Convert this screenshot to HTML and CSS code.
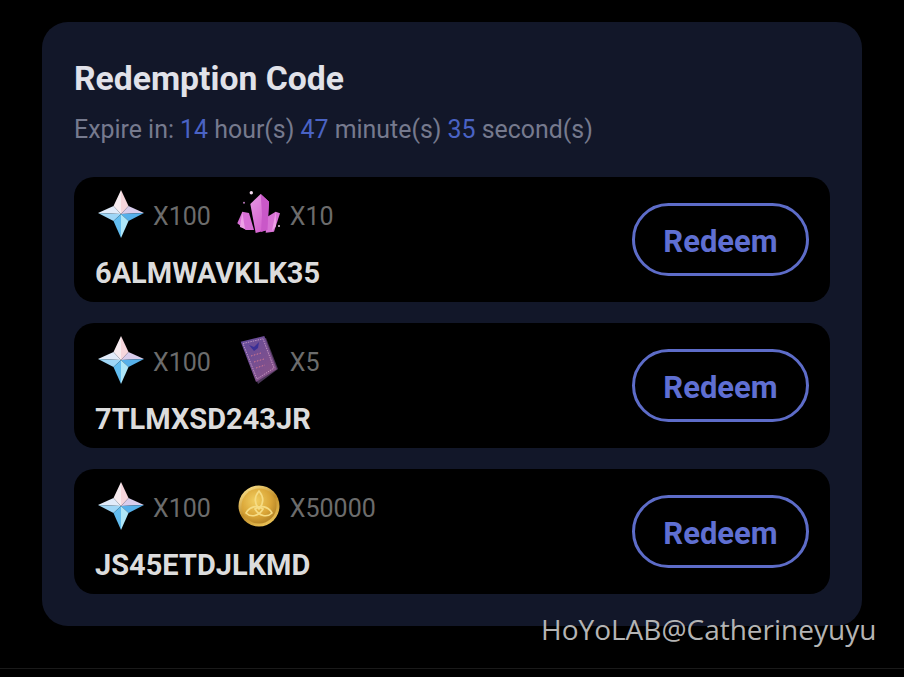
FILE: index.html
```html
<!DOCTYPE html>
<html lang="en">
<head>
    <meta charset="UTF-8">
    <meta name="viewport" content="width=device-width, initial-scale=1.0">
    <title>Redemption Code</title>
    <link rel="stylesheet" href="styles.css">
</head>
<body>
    <!-- shared icons -->
    <svg class="defs" width="0" height="0" aria-hidden="true">
        <defs>
            <radialGradient id="coinFill" cx="0.4" cy="0.35" r="0.75">
                <stop offset="0" stop-color="#f2cf62"/>
                <stop offset="0.6" stop-color="#d9a436"/>
                <stop offset="1" stop-color="#a97a22"/>
            </radialGradient>
            <linearGradient id="coinRim" x1="0.2" y1="0" x2="0.8" y2="1">
                <stop offset="0" stop-color="#fbe38e"/>
                <stop offset="0.5" stop-color="#c28f2a"/>
                <stop offset="1" stop-color="#f0c95c"/>
            </linearGradient>
            <linearGradient id="crystalFill" x1="0" y1="0" x2="0.6" y2="1">
                <stop offset="0" stop-color="#e79ae3"/>
                <stop offset="1" stop-color="#d45fcf"/>
            </linearGradient>
            <linearGradient id="bookFill" x1="0" y1="0" x2="1" y2="1">
                <stop offset="0" stop-color="#5f4a9c"/>
                <stop offset="1" stop-color="#8f5486"/>
            </linearGradient>
            <symbol id="gem" viewBox="0 0 48 50">
                <polygon points="24,1 16.5,17 24,25" fill="#f7ecf0"/>
                <polygon points="24,1 31.5,17 24,25" fill="#f6d6dc"/>
                <polygon points="1,24 16.5,17 24,25" fill="#e2ecfa"/>
                <polygon points="47,24 31.5,17 24,25" fill="#d9cdec"/>
                <polygon points="1,24 16.5,32 24,25" fill="#9fd6f6"/>
                <polygon points="47,24 31.5,32 24,25" fill="#56b0ea"/>
                <polygon points="24,49 16.5,32 24,25" fill="#62bdf0"/>
                <polygon points="24,49 31.5,32 24,25" fill="#aee6f8"/>
            </symbol>
            <symbol id="crystal" viewBox="0 0 46 48">
                <polygon points="1.3,33.3 6.3,21.7 13,23 18,40 9.7,40" fill="#d86fd6"/>
                <polygon points="31.3,26.7 39.7,21.7 44,23.3 38,41.7 29.7,42.7" fill="#d873d5"/>
                <polygon points="14.3,14 24.7,4 33,11.7 31.3,40 19.7,43" fill="url(#crystalFill)"/>
                <polygon points="24.7,4 26,24 25,42 31.3,40 33,11.7" fill="#c958c8"/>
                <polygon points="6.3,21.7 9,39 4,37" fill="#ee9fe8"/>
                <polygon points="39.7,21.7 36,41 40,36" fill="#ee9fe8"/>
                <circle cx="15.3" cy="2.7" r="1.7" fill="#f2d9ee"/>
                <circle cx="8" cy="12.7" r="1" fill="#b877b8"/>
                <circle cx="43" cy="36" r="1" fill="#e8cce6"/>
            </symbol>
            <symbol id="book" viewBox="0 0 46 48">
                <polygon points="7,7 30,2 42,33 22,48" fill="#4b3658"/>
                <polygon points="4.7,5.7 28.3,0 40.7,33.3 20,46" fill="url(#bookFill)"/>
                <polygon points="7,7.5 27,2.8 38,32 21,43" fill="none" stroke="#d2a6cc" stroke-width="0.8" stroke-dasharray="1.5 1"/>
                <path d="M13 9 l5 2 l5 -5 l-1 6 l-4 3 z" fill="#3a2f96"/>
                <path d="M15 20 l10 -3 M18 26 l10 -3 M20 32 l9 -3" stroke="#d5788f" stroke-width="1" stroke-dasharray="1.5 1.5"/>
            </symbol>
            <symbol id="coin" viewBox="-2 -3 46 48">
                <circle cx="21" cy="21" r="20.5" fill="url(#coinRim)"/>
                <circle cx="21" cy="21" r="17.5" fill="url(#coinFill)"/>
                <path d="M21 6 C26 12 26 18 21 24 C16 18 16 12 21 6 Z" fill="none" stroke="#f6dc84" stroke-width="1.6"/>
                <path d="M8 28 C12 21 19 20 25 24 C21 31 13 33 8 28 Z" fill="none" stroke="#f6dc84" stroke-width="1.6"/>
                <path d="M34 28 C30 21 23 20 17 24 C21 31 29 33 34 28 Z" fill="none" stroke="#f6dc84" stroke-width="1.6"/>
            </symbol>
        </defs>
    </svg>

    <div class="card">
        <h1 class="card-title">Redemption Code</h1>
        <p class="expire">Expire in: <span class="num">14</span> hour(s) <span class="num">47</span> minute(s) <span class="num">35</span> second(s)</p>

        <div class="code-list">
            <div class="code-row">
                <div class="code-info">
                    <div class="rewards">
                        <div class="reward">
                            <svg class="icon-gem"><use href="#gem"/></svg>
                            <span>X100</span>
                        </div>
                        <div class="reward">
                            <svg class="icon-item"><use href="#crystal"/></svg>
                            <span>X10</span>
                        </div>
                    </div>
                    <div class="code">6ALMWAVKLK35</div>
                </div>
                <button class="redeem-btn">Redeem</button>
            </div>
            <div class="code-row">
                <div class="code-info">
                    <div class="rewards">
                        <div class="reward">
                            <svg class="icon-gem"><use href="#gem"/></svg>
                            <span>X100</span>
                        </div>
                        <div class="reward">
                            <svg class="icon-item"><use href="#book"/></svg>
                            <span>X5</span>
                        </div>
                    </div>
                    <div class="code">7TLMXSD243JR</div>
                </div>
                <button class="redeem-btn">Redeem</button>
            </div>
            <div class="code-row">
                <div class="code-info">
                    <div class="rewards">
                        <div class="reward">
                            <svg class="icon-gem"><use href="#gem"/></svg>
                            <span>X100</span>
                        </div>
                        <div class="reward">
                            <svg class="icon-item"><use href="#coin"/></svg>
                            <span>X50000</span>
                        </div>
                    </div>
                    <div class="code">JS45ETDJLKMD</div>
                </div>
                <button class="redeem-btn">Redeem</button>
            </div>
        </div>
    </div>

    <div class="watermark">HoYoLAB@Catherineyuyu</div>
    <div class="bottom-line"></div>
</body>
</html>
```

FILE: styles.css
```css
html, body {
    height: 100%;
}
body {
    font-family: Roboto, sans-serif;
    margin: 0;
    padding: 22px 42px 0;
    background-color: #000;
    box-sizing: border-box;
    position: relative;
    overflow: hidden;
}
.defs {
    position: absolute;
}
.card {
    width: 820px;
    height: 604px;
    padding: 37px 32px 0;
    background-color: #121729;
    border-radius: 26px;
    box-sizing: border-box;
}
.card-title {
    margin: 0;
    font-size: 33.7px;
    line-height: 40px;
    font-weight: 700;
    color: #e1e2e9;
}
.expire {
    margin: 16px 0 0;
    font-size: 24.9px;
    line-height: 30px;
    color: #767a8e;
}
.num {
    color: #4a63c4;
}
.code-list {
    display: flex;
    flex-direction: column;
    gap: 21px;
    margin-top: 32px;
}
.code-row {
    display: flex;
    align-items: center;
    justify-content: space-between;
    height: 125px;
    padding: 0 21px;
    background-color: #000;
    border-radius: 20px;
}
.code-info {
    display: flex;
    flex-direction: column;
    align-self: flex-start;
    padding-top: 12px;
}
.rewards {
    display: flex;
    gap: 25px;
    height: 50px;
    margin: 2px 0 0 2px;
}
.reward {
    display: flex;
    align-items: center;
    gap: 8px;
    font-size: 25px;
    color: #6c6c6c;
}
.icon-gem {
    width: 48px;
    height: 50px;
    margin-bottom: 4px;
    filter: blur(0.4px);
}
.icon-item {
    width: 46px;
    height: 48px;
    margin-bottom: 4px;
    filter: blur(0.5px);
}
.code {
    margin-top: 15px;
    font-size: 29px;
    line-height: 34px;
    font-weight: 700;
    color: #dcdcdc;
}
.redeem-btn {
    width: 177px;
    height: 73px;
    padding: 4px 0 0;
    background: none;
    border: 3px solid #5d6cc8;
    border-radius: 37px;
    font-family: Roboto, sans-serif;
    font-size: 31px;
    font-weight: 700;
    color: #5f6fd2;
    cursor: pointer;
}
.watermark {
    position: absolute;
    left: 541px;
    top: 611px;
    font-family: "Open Sans", sans-serif;
    font-size: 28px;
    line-height: 36px;
    color: #b4b4b4;
}
.bottom-line {
    position: absolute;
    left: 0;
    right: 0;
    top: 668px;
    height: 1px;
    background-color: #1a1a1a;
}
```
